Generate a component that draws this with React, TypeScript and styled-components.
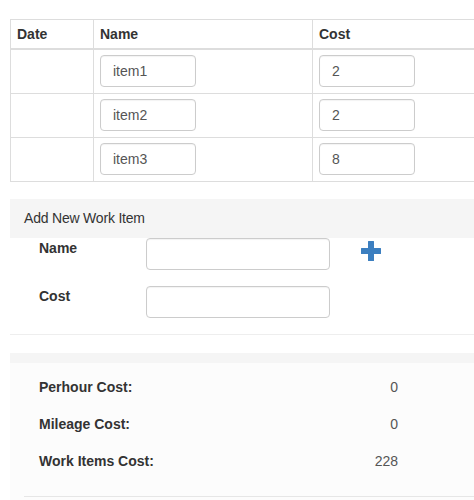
import React from "react";
import styled, { createGlobalStyle } from "styled-components";

const GlobalStyle = createGlobalStyle`
  html, body {
    margin: 0;
    padding: 0;
    background: #fff;
    overflow-x: hidden;
  }
  body {
    font-family: "Liberation Sans", Arial, sans-serif;
    font-size: 14px;
    line-height: 20px;
    color: #333;
  }
`;

const Page = styled.div`
  padding: 19px 0 0 10px;
`;

const ItemsTable = styled.table`
  width: 100%;
  border-collapse: collapse;
  border-spacing: 0;
  border-left: 1px solid #ddd;
`;

const HeadCell = styled.th<{ $width?: number }>`
  text-align: left;
  font-weight: bold;
  padding: 4px 6px 4px;
  border-top: 1px solid #ddd;
  border-bottom: 2px solid #ddd;
  border-right: 1px solid #ddd;
  ${(p) => (p.$width ? `width: ${p.$width}px;` : "")}
  box-sizing: border-box;

  &:last-child {
    border-right: none;
  }
`;

const Cell = styled.td`
  padding: 5px 6px 6px;
  border-bottom: 1px solid #ddd;
  border-right: 1px solid #ddd;
  vertical-align: top;

  &:last-child {
    border-right: none;
  }
`;

const TextInput = styled.input<{ $width: number }>`
  display: block;
  box-sizing: border-box;
  width: ${(p) => p.$width}px;
  height: 32px;
  padding: 6px 12px;
  font-family: "Liberation Sans", Arial, sans-serif;
  font-size: 14px;
  color: #555;
  background: #fff;
  border: 1px solid #ccc;
  border-radius: 4px;
  box-shadow: inset 0 1px 1px rgba(0, 0, 0, 0.05);
  outline: none;
`;

const Panel = styled.section`
  margin-top: 17px;
`;

const PanelHeading = styled.div`
  background: #f5f5f5;
  height: 39px;
  line-height: 39px;
  padding-left: 14px;
  font-size: 14px;
  letter-spacing: -0.2px;
  color: #333;
`;

const FormBody = styled.div`
  display: flex;
  flex-direction: column;
  gap: 16px;
  padding-bottom: 16px;
  border-bottom: 1px solid #eee;
`;

const FormRow = styled.div`
  display: flex;
  align-items: flex-start;
  padding-left: 29px;
`;

const FormLabel = styled.label`
  width: 107px;
  font-weight: bold;
  line-height: 20px;
`;

const AddButton = styled.button`
  margin: 2px 0 0 30px;
  padding: 0;
  border: none;
  background: none;
  cursor: pointer;
  line-height: 0;
`;

const SummaryPanel = styled.section`
  margin-top: 18px;
  background: #f5f5f5;
  padding-top: 10px;
`;

const SummaryBody = styled.div`
  background: #fcfcfc;
  padding: 5px 0 14px 14px;
`;

const SummaryList = styled.div`
  border-bottom: 1px solid #e6e6e6;
  padding-bottom: 17px;
`;

const SummaryRow = styled.div`
  display: flex;
  justify-content: space-between;
  align-items: center;
  width: 374px;
  height: 37px;
  padding-left: 15px;
  box-sizing: border-box;
`;

const SummaryLabel = styled.span`
  font-weight: bold;
`;

const SummaryValue = styled.span`
  color: #555;
`;

const PlusIcon = () => (
  <svg width="22" height="22" viewBox="0 0 22 22">
    <path
      d="M8 1.5 Q8 1 8.5 1 H13.5 Q14 1 14 1.5 V8 H20.5 Q21 8 21 8.5 V13.5 Q21 14 20.5 14 H14 V20.5 Q14 21 13.5 21 H8.5 Q8 21 8 20.5 V14 H1.5 Q1 14 1 13.5 V8.5 Q1 8 1.5 8 H8 Z"
      fill="#3c7fc0"
    />
  </svg>
);

const items = [
  { name: "item1", cost: "2" },
  { name: "item2", cost: "2" },
  { name: "item3", cost: "8" },
];

const summary = [
  { label: "Perhour Cost:", value: "0" },
  { label: "Mileage Cost:", value: "0" },
  { label: "Work Items Cost:", value: "228" },
];

const App: React.FC = () => {
  return (
    <>
      <GlobalStyle />
      <Page>
        <ItemsTable>
          <thead>
            <tr>
              <HeadCell $width={83}>Date</HeadCell>
              <HeadCell $width={219}>Name</HeadCell>
              <HeadCell>Cost</HeadCell>
            </tr>
          </thead>
          <tbody>
            {items.map((item) => (
              <tr key={item.name}>
                <Cell />
                <Cell>
                  <TextInput $width={96} defaultValue={item.name} />
                </Cell>
                <Cell>
                  <TextInput $width={96} defaultValue={item.cost} />
                </Cell>
              </tr>
            ))}
          </tbody>
        </ItemsTable>

        <Panel>
          <PanelHeading>Add New Work Item</PanelHeading>
          <FormBody>
            <FormRow>
              <FormLabel>Name</FormLabel>
              <TextInput $width={184} />
              <AddButton aria-label="Add work item">
                <PlusIcon />
              </AddButton>
            </FormRow>
            <FormRow>
              <FormLabel>Cost</FormLabel>
              <TextInput $width={184} />
            </FormRow>
          </FormBody>
        </Panel>

        <SummaryPanel>
          <SummaryBody>
            <SummaryList>
              {summary.map((row) => (
                <SummaryRow key={row.label}>
                  <SummaryLabel>{row.label}</SummaryLabel>
                  <SummaryValue>{row.value}</SummaryValue>
                </SummaryRow>
              ))}
            </SummaryList>
          </SummaryBody>
        </SummaryPanel>
      </Page>
    </>
  );
};

export default App;
